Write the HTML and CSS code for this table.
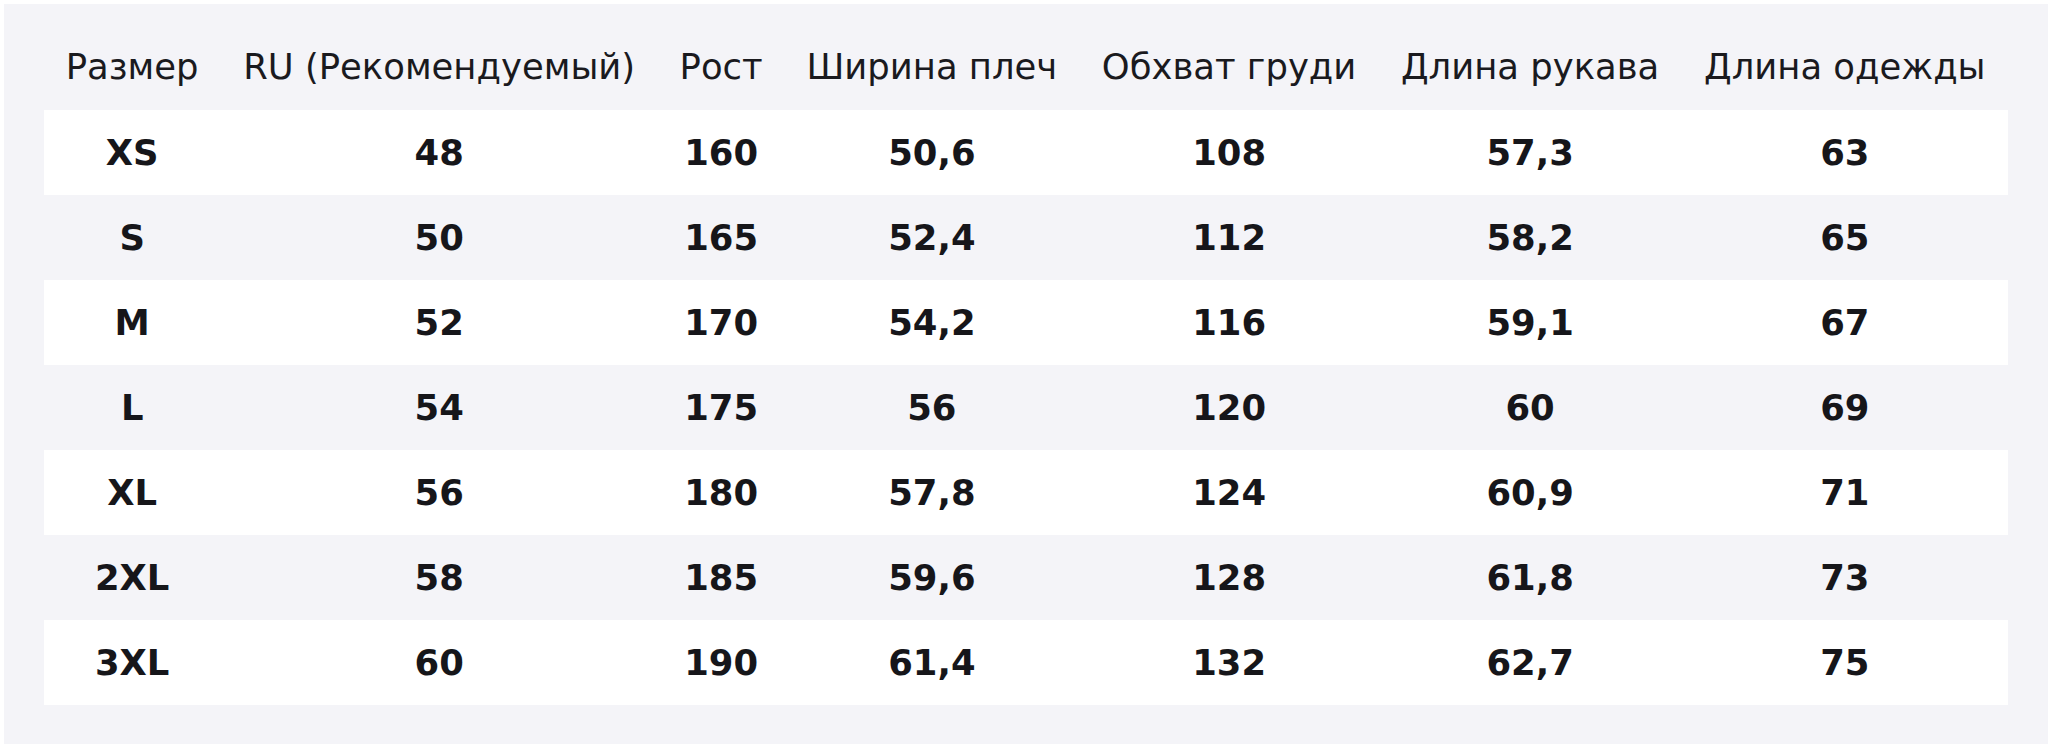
FILE: index.html
```html
<!DOCTYPE html>
<html lang="ru">
<head>
<meta charset="utf-8">
<title>Размеры</title>
<link rel="stylesheet" href="styles.css">
</head>
<body>
<div class="panel">
  <table class="sizes">
    <thead>
      <tr>
        <th>Размер</th>
        <th>RU (Рекомендуемый)</th>
        <th>Рост</th>
        <th>Ширина плеч</th>
        <th>Обхват груди</th>
        <th>Длина рукава</th>
        <th>Длина одежды</th>
      </tr>
    </thead>
    <tbody>
      <tr><td>XS</td><td>48</td><td>160</td><td>50,6</td><td>108</td><td>57,3</td><td>63</td></tr>
      <tr><td>S</td><td>50</td><td>165</td><td>52,4</td><td>112</td><td>58,2</td><td>65</td></tr>
      <tr><td>M</td><td>52</td><td>170</td><td>54,2</td><td>116</td><td>59,1</td><td>67</td></tr>
      <tr><td>L</td><td>54</td><td>175</td><td>56</td><td>120</td><td>60</td><td>69</td></tr>
      <tr><td>XL</td><td>56</td><td>180</td><td>57,8</td><td>124</td><td>60,9</td><td>71</td></tr>
      <tr><td>2XL</td><td>58</td><td>185</td><td>59,6</td><td>128</td><td>61,8</td><td>73</td></tr>
      <tr><td>3XL</td><td>60</td><td>190</td><td>61,4</td><td>132</td><td>62,7</td><td>75</td></tr>
    </tbody>
  </table>
</div>
</body>
</html>
```

FILE: styles.css
```css
html, body {
  margin: 0;
  padding: 0;
  background: #ffffff;
}

body {
  padding: 4px;
  font-family: "DejaVu Sans", "Verdana", sans-serif;
  color: #16161a;
}

.panel {
  box-sizing: border-box;
  width: 2044px;
  height: 740px;
  padding: 40px 40px 39px;
  background: #f4f4f8;
}

.sizes {
  width: 100%;
  border-collapse: collapse;
  border-spacing: 0;
}

.sizes th {
  font-weight: normal;
  font-size: 35.4px;
  line-height: 42px;
  height: 42px;
  padding: 2px 21px 22px;
  text-align: center;
  vertical-align: top;
  white-space: nowrap;
  color: #1a1a1e;
}

.sizes td {
  font-weight: bold;
  font-size: 35.4px;
  line-height: 42px;
  height: 85px;
  padding: 0 21px;
  text-align: center;
  vertical-align: middle;
  white-space: nowrap;
  box-sizing: border-box;
}

.sizes tbody tr:nth-child(odd) {
  background: #ffffff;
}
```
